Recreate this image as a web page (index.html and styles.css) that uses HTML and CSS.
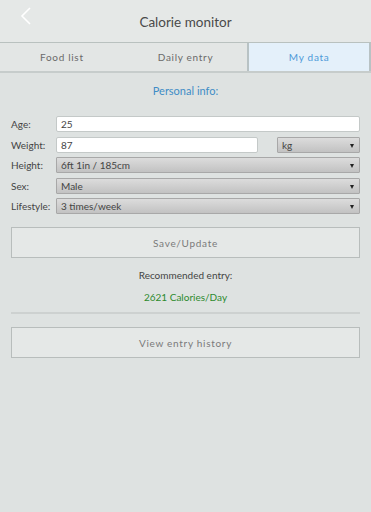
FILE: index.html
```html
<!DOCTYPE html>
<html lang="en">
<head>
  <meta charset="UTF-8">
  <meta name="viewport" content="width=device-width, initial-scale=1.0">
  <title>Calorie monitor</title>
  <link rel="stylesheet" href="styles.css">
</head>
<body>

  <div class="topbar">
    <span class="back">
      <svg width="12" height="18" viewBox="0 0 12 18"><path d="M10 1 L2 9 L10 17" fill="none" stroke="#fff" stroke-width="1.6"/></svg>
    </span>
    <div class="title">Calorie monitor</div>
  </div>

  <div class="tabs">
    <div class="tab">Food list</div>
    <div class="tab">Daily entry</div>
    <div class="tab active">My data</div>
  </div>

  <div class="content">
    <div class="heading">Personal info:</div>

    <div class="form">
      <div class="row">
        <label>Age:</label>
        <div class="input">25</div>
      </div>
      <div class="row">
        <label>Weight:</label>
        <div class="input weight">87</div>
        <div class="select unit">kg<span class="arrow"></span></div>
      </div>
      <div class="row">
        <label>Height:</label>
        <div class="select">6ft 1in / 185cm<span class="arrow"></span></div>
      </div>
      <div class="row">
        <label>Sex:</label>
        <div class="select">Male<span class="arrow"></span></div>
      </div>
      <div class="row">
        <label>Lifestyle:</label>
        <div class="select">3 times/week<span class="arrow"></span></div>
      </div>
    </div>

    <button class="btn save">Save/Update</button>

    <div class="rec">Recommended entry:</div>
    <div class="cal">2621 Calories/Day</div>

    <hr class="divider">

    <button class="btn">View entry history</button>
  </div>

</body>
</html>
```
FILE: styles.css
```css
* { box-sizing: border-box; margin: 0; padding: 0; }
body {
  background-color: #dee2e1;
  color: #444;
  font-family: 'Lato', sans-serif;
  width: 371px; min-height: 512px;
}
.topbar {
  height: 43px; background-color: #e5e8e7;
  border-bottom: 1px solid #b9c1bf;
  display: flex; align-items: center; justify-content: center;
  position: relative;
}
.back { position: absolute; left: 20px; top: 7px; }
.title { font-size: 13.5px; color: #4a4a4a; padding-top: 2px; }
.tabs {
  display: grid; grid-template-columns: 1fr 1fr 1fr;
  height: 30px; background-color: #e3e6e5;
  border-bottom: 2px solid #c6cccb;
}
.tab {
  display: flex; align-items: center; justify-content: center;
  font-size: 10px; color: #6a6a6a; letter-spacing: 0.7px;
}
.tab.active {
  background-color: #e4f0fa; color: #4d9ad9;
  border-left: 2px solid #b8c2c4; border-right: 2px solid #b8c2c4;
}
.content { padding: 0 11px; }
.heading {
  text-align: center; color: #3f8dc6; font-size: 11px;
  padding-top: 11px; height: 43px;
}
.form { display: flex; flex-direction: column; gap: 4.5px; }
.row { display: flex; align-items: center; height: 16px; font-size: 10px; }
.row label { width: 45px; color: #444; }
.input {
  flex: 1; height: 16px; background: #fff;
  border: 1px solid #c4c9c8; border-radius: 2px;
  padding: 0 4px; line-height: 14px; color: #444; font-size: 10px;
}
.input.weight { flex: none; width: 202px; margin-right: 19px; }
.select {
  flex: 1; height: 16px; position: relative;
  background: linear-gradient(#dcdcdc, #c2c2c2);
  border: 1px solid #a8a8a8; border-radius: 1px;
  padding: 0 4px; line-height: 14px; color: #444; font-size: 10px;
}
.arrow {
  position: absolute; right: 5px; top: 6px;
  border-left: 2.5px solid transparent; border-right: 2.5px solid transparent;
  border-top: 4px solid #222;
}
.btn {
  display: block; width: 100%; height: 31px;
  background-color: #e5e8e7; border: 1px solid #b8bdbc;
  font-family: 'Lato', sans-serif; font-size: 10px;
  color: #7a7a7a; letter-spacing: 0.7px;
}
.save { margin-top: 13px; }
.rec { text-align: center; font-size: 10px; color: #444; margin-top: 11px; }
.cal { text-align: center; font-size: 10px; color: #2d8a2d; margin-top: 10px; }
.divider {
  border: none; border-top: 2px solid #cdd1d0;
  margin: 9px 0 13px;
}
```
